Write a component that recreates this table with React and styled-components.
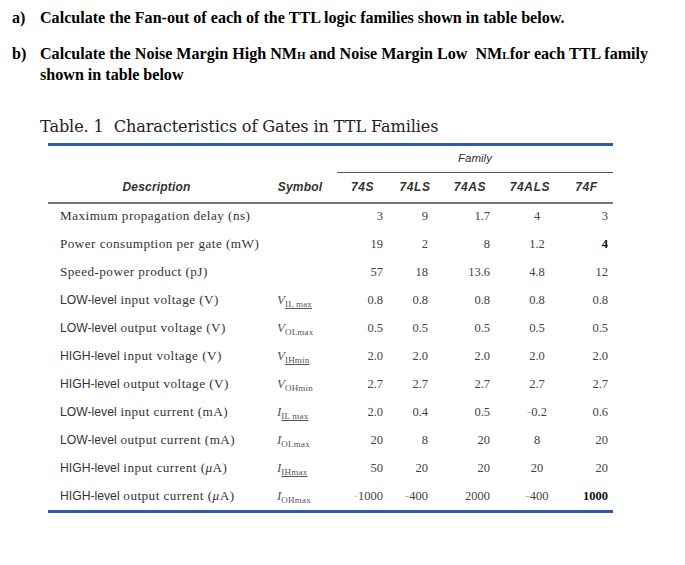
import React from "react";
import styled, { createGlobalStyle } from "styled-components";

const Global = createGlobalStyle`
  html, body { margin: 0; padding: 0; background: #ffffff; }
  body { width: 685px; height: 565px; overflow: hidden; }
`;

const Page = styled.div`
  padding: 8px 0 0 0;
  font-family: "Liberation Serif", "Times New Roman", serif;
  color: #000;
`;

const Question = styled.div`
  display: flex;
  font-weight: bold;
  font-size: 16.1px;
  line-height: 19px;
  margin: ${(p) => p.$mt || 0}px 0 0 12px;
`;

const QLabel = styled.span`
  width: 28px;
  flex: none;
`;

const QText = styled.span`
  width: 614px;
`;

const Small = styled.span`
  font-size: 11px;
`;

const Caption = styled.div`
  margin: 33px 0 0 40px;
  font-family: "DejaVu Serif", "Liberation Serif", serif;
  font-size: 16.1px;
  font-weight: 300;
  letter-spacing: -0.1px;
  color: #222;
  line-height: 19px;
`;

const Table = styled.div`
  margin: 7px 0 0 48px;
  width: 565px;
  border-top: 3px solid #2a5fa8;
  border-bottom: 3px solid #2a5fa8;
`;

const COLS = "217px 70px 55px 50px 60px 60px 53px";

const FamilyRow = styled.div`
  display: grid;
  grid-template-columns: 289px 276px;
  height: 27px;
`;

const FamilyCell = styled.div`
  grid-column: 2;
  border-bottom: 1px solid #555;
  text-align: center;
  font-family: "Liberation Sans", Arial, sans-serif;
  font-style: italic;
  font-size: 11.5px;
  line-height: 24px;
  color: #333;
`;

const HeadRow = styled.div`
  display: grid;
  grid-template-columns: ${COLS};
  height: 29px;
  border-bottom: 2px solid #777;
`;

const HeadCell = styled.div`
  text-align: center;
  font-family: "Liberation Sans", Arial, sans-serif;
  font-style: italic;
  font-weight: bold;
  font-size: 12px;
  line-height: 28px;
  color: #333;
  letter-spacing: ${(p) => (p.$wide ? "0.6px" : "0.2px")};
`;

const Row = styled.div`
  display: grid;
  grid-template-columns: ${COLS};
  height: ${(p) => (p.$last ? 26 : 28)}px;
  line-height: 24px;
`;

const Desc = styled.div`
  padding-left: 12px;
  font-family: "Liberation Serif", "Times New Roman", serif;
  font-size: 13.2px;
  letter-spacing: 0.45px;
  color: #333;
  white-space: nowrap;
`;

const Sans = styled.span`
  font-family: "Liberation Sans", Arial, sans-serif;
  font-size: 12.2px;
  letter-spacing: 0;
`;

const Mu = styled.span`
  font-style: italic;
`;

const Sym = styled.div`
  padding-left: 12px;
  font-family: "Liberation Serif", "Times New Roman", serif;
  font-size: 13px;
  color: #555;
  white-space: nowrap;
`;

const SymMain = styled.span`
  font-style: italic;
`;

const Sub = styled.span`
  font-size: 9px;
  position: relative;
  top: 3px;
  letter-spacing: 0.2px;
  text-decoration: ${(p) => (p.$u ? "underline" : "none")};
`;

const Val = styled.div`
  font-family: "Liberation Serif", "Times New Roman", serif;
  font-size: 12.5px;
  color: ${(p) => (p.$dark ? "#111" : "#444")};
  font-weight: ${(p) => (p.$dark ? "bold" : "normal")};
  text-align: ${(p) => p.$align};
  padding-right: ${(p) => p.$pr}px;
  padding-left: ${(p) => p.$pl}px;
  white-space: nowrap;
`;

const Faint = styled.span`
  color: #aaa;
`;

const colFmt = [
  { align: "right", pr: 7, pl: 0 },
  { align: "right", pr: 12, pl: 0 },
  { align: "right", pr: 10, pl: 0 },
  { align: "center", pr: 0, pl: 14 },
  { align: "right", pr: 5, pl: 0 },
];

const rows = [
  { d: ["", "Maximum propagation delay (ns)"], s: null, v: ["3", "9", "1.7", "4", "3"] },
  { d: ["", "Power consumption per gate (mW)"], s: null, v: ["19", "2", "8", "1.2", "4"] },
  { d: ["", "Speed-power product (pJ)"], s: null, v: ["57", "18", "13.6", "4.8", "12"] },
  { d: ["LOW-level", " input voltage (V)"], s: ["V", "IL max", true], v: ["0.8", "0.8", "0.8", "0.8", "0.8"] },
  { d: ["LOW-level", " output voltage (V)"], s: ["V", "OLmax", false], v: ["0.5", "0.5", "0.5", "0.5", "0.5"] },
  { d: ["HIGH-level", " input voltage (V)"], s: ["V", "IHmin", true], v: ["2.0", "2.0", "2.0", "2.0", "2.0"] },
  { d: ["HIGH-level", " output voltage (V)"], s: ["V", "OHmin", false], v: ["2.7", "2.7", "2.7", "2.7", "2.7"] },
  { d: ["LOW-level", " input current (mA)"], s: ["I", "IL max", true], v: ["2.0", "0.4", "0.5", "-0.2", "0.6"] },
  { d: ["LOW-level", " output current (mA)"], s: ["I", "OLmax", false], v: ["20", "8", "20", "8", "20"] },
  { d: ["HIGH-level", " input current (", "μ", "A)"], s: ["I", "IHmax", true], v: ["50", "20", "20", "20", "20"] },
  { d: ["HIGH-level", " output current (", "μ", "A)"], s: ["I", "OHmax", false], v: ["·1000", "-400", "2000", "-400", "1000"] },
];

function renderVal(v) {
  if (v.startsWith("·") || v.startsWith("-")) {
    return (
      <>
        <Faint>{v[0]}</Faint>
        {v.slice(1)}
      </>
    );
  }
  return v;
}

export default function App() {
  return (
    <Page>
      <Global />
      <Question>
        <QLabel>a)</QLabel>
        <QText>Calculate the Fan-out of each of the TTL logic families shown in table below.</QText>
      </Question>
      <Question $mt={17}>
        <QLabel>b)</QLabel>
        <QText>
          Calculate the Noise Margin High NM<Small>H</Small> and Noise Margin Low&nbsp; NM<Small>L</Small>for each TTL family shown in table below
        </QText>
      </Question>
      <Caption>Table. 1&nbsp; Characteristics of Gates in TTL Families</Caption>
      <Table>
        <FamilyRow>
          <FamilyCell>Family</FamilyCell>
        </FamilyRow>
        <HeadRow>
          <HeadCell>Description</HeadCell>
          <HeadCell>Symbol</HeadCell>
          <HeadCell $wide>74S</HeadCell>
          <HeadCell $wide>74LS</HeadCell>
          <HeadCell $wide>74AS</HeadCell>
          <HeadCell $wide>74ALS</HeadCell>
          <HeadCell $wide>74F</HeadCell>
        </HeadRow>
        {rows.map((r, i) => (
          <Row key={i} $last={i === rows.length - 1}>
            <Desc>
              {r.d[0] && <Sans>{r.d[0]}</Sans>}
              {r.d[1]}
              {r.d[2] && <Mu>{r.d[2]}</Mu>}
              {r.d[3]}
            </Desc>
            <Sym>
              {r.s && (
                <>
                  <SymMain>{r.s[0]}</SymMain>
                  <Sub $u={r.s[2]}>{r.s[1]}</Sub>
                </>
              )}
            </Sym>
            {r.v.map((v, j) => (
              <Val
                key={j}
                $align={colFmt[j].align}
                $pr={colFmt[j].pr}
                $pl={colFmt[j].pl}
                $dark={(i === 1 && j === 4) || (i === 10 && j === 4)}
              >
                {renderVal(v)}
              </Val>
            ))}
          </Row>
        ))}
      </Table>
    </Page>
  );
}
